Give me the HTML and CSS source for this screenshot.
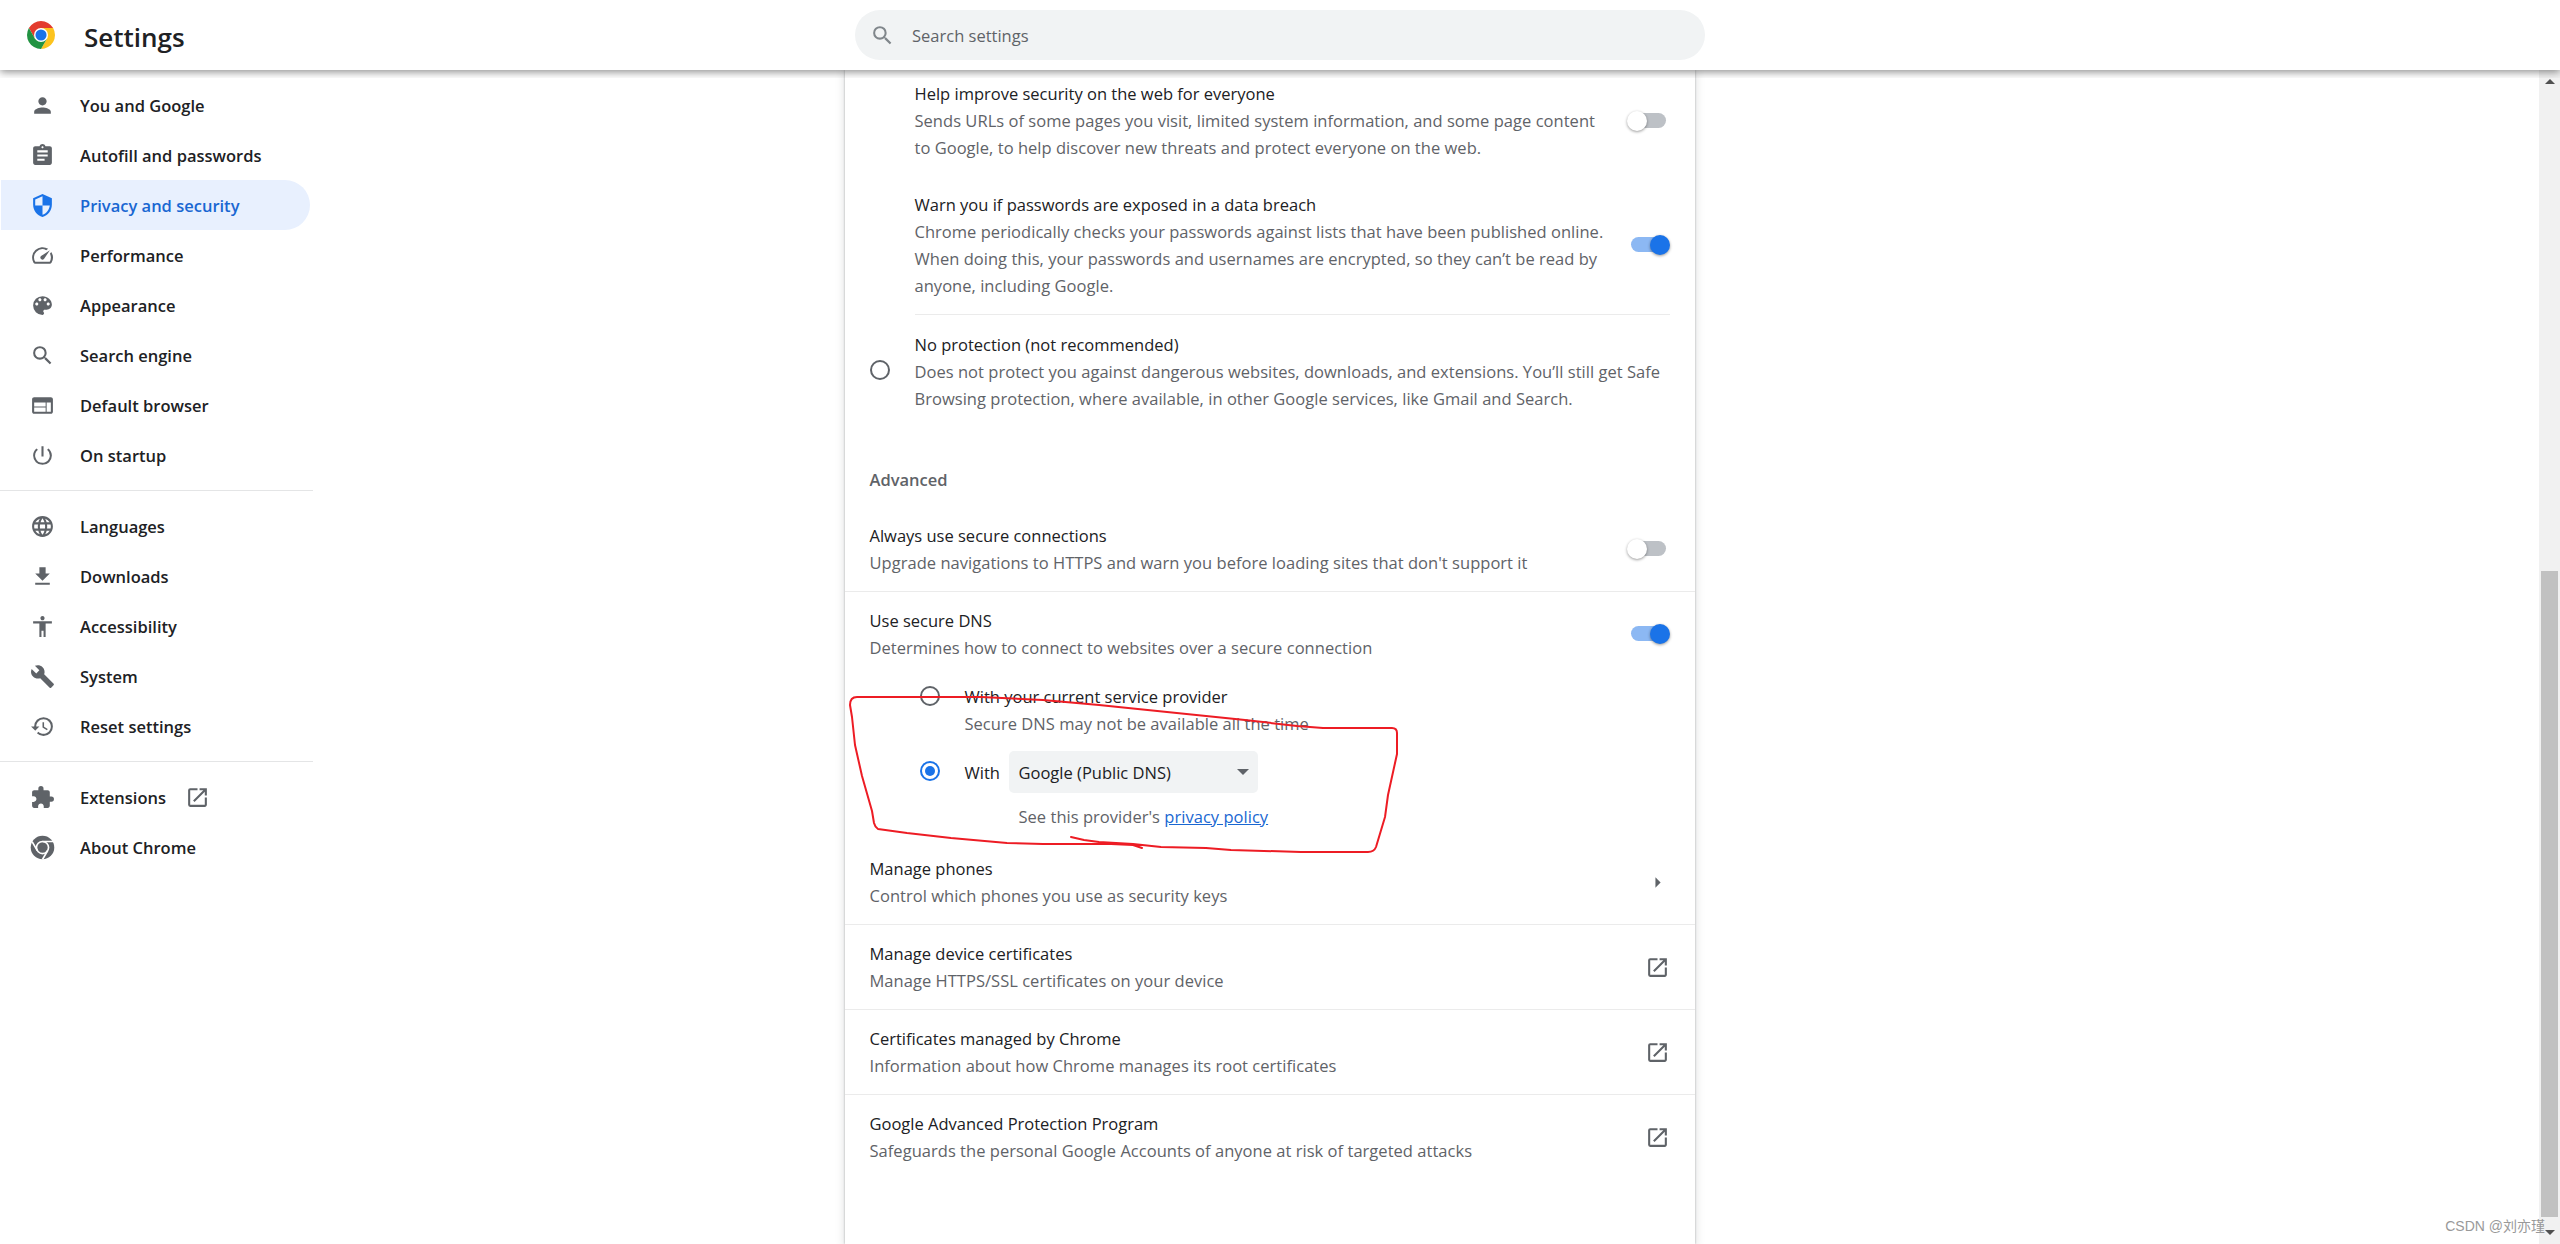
FILE: index.html
```html
<!DOCTYPE html>
<html lang="en">
<head>
  <meta charset="UTF-8" />
  <title>Settings - Privacy and security</title>
  <link rel="stylesheet" href="styles.css">
</head>
<body>
  <svg class="defs">
    <symbol id="open" viewBox="0 0 24 24"><path d="M19 19H5V5h7V3H5a2 2 0 0 0-2 2v14a2 2 0 0 0 2 2h14c1.100 0 2-.9 2-2v-7h-2v7zM14 3v2h3.590l-9.830 9.830 1.410 1.410L19 6.410V10h2V3h-7z"/></symbol>
    <symbol id="search" viewBox="0 0 24 24"><path d="M15.500 14h-.79l-.28-.27A6.471 6.471 0 0 0 16 9.500 6.500 6.500 0 1 0 9.500 16c1.610 0 3.090-.59 4.230-1.570l.27.28v.79l5 4.990L20.490 19l-4.990-5zm-6 0C7.010 14 5 11.990 5 9.500S7.010 5 9.500 5 14 7.010 14 9.500 11.990 14 9.500 14z"/></symbol>
  </svg>

  <header class="toolbar">
    <div class="brand">
      <svg class="logo" viewBox="0 0 48 48">
        <path fill="#e33b2e" d="M24 12h20.780A24 24 0 0 0 3.220 12l10.390 18z"/>
        <path fill="#fcc31e" d="M34.390 30 24 48A24 24 0 0 0 44.780 12H24z"/>
        <path fill="#229342" d="M13.610 30 3.220 12A24 24 0 0 0 24 48l10.390-18z"/>
        <circle cx="24" cy="24" r="12" fill="#fff"/>
        <circle cx="24" cy="24" r="9.500" fill="#1a73e8"/>
      </svg>
      <h1>Settings</h1>
    </div>
    <div class="search">
      <svg class="icon"><use href="#search"/></svg>
      <span>Search settings</span>
    </div>
  </header>

  <div class="container">
    <nav class="menu">
      <a class="item"><svg class="icon" viewBox="0 0 24 24"><path d="M12 12c2.210 0 4-1.790 4-4s-1.790-4-4-4-4 1.790-4 4 1.790 4 4 4zm0 2c-2.670 0-8 1.340-8 4v2h16v-2c0-2.660-5.330-4-8-4z"/></svg>You and Google</a>
      <a class="item"><svg class="icon" viewBox="0 0 24 24"><path d="M19 3h-4.180C14.400 1.840 13.300 1 12 1s-2.400.84-2.820 2H5c-1.100 0-2 .9-2 2v14c0 1.100.9 2 2 2h14c1.100 0 2-.9 2-2V5c0-1.100-.9-2-2-2zm-7 0c.55 0 1 .45 1 1s-.45 1-1 1-1-.45-1-1 .45-1 1-1zm2 14H7v-2h7v2zm3-4H7v-2h10v2zm0-4H7V7h10v2z"/></svg>Autofill and passwords</a>
      <a class="item selected"><svg class="icon" viewBox="0 0 24 24"><path d="M12 1 3 5v6c0 5.550 3.840 10.740 9 12 5.160-1.260 9-6.450 9-12V5l-9-4zm0 10.990h7c-.53 4.120-3.280 7.790-7 8.940V12H5V6.300l7-3.110v8.800z"/></svg>Privacy and security</a>
      <a class="item"><svg class="icon" viewBox="0 0 24 24"><path d="m20.380 8.570-1.230 1.850a8 8 0 0 1-.22 7.580H5.070A8 8 0 0 1 15.580 6.850l1.850-1.230A10 10 0 0 0 3.350 19a2 2 0 0 0 1.720 1h13.850a2 2 0 0 0 1.740-1 10 10 0 0 0-.27-10.440zm-9.790 6.840a2 2 0 0 0 2.830 0l5.660-8.490-8.490 5.660a2 2 0 0 0 0 2.830z"/></svg>Performance</a>
      <a class="item"><svg class="icon" viewBox="0 0 24 24"><path d="M12 3a9 9 0 0 0 0 18c.83 0 1.500-.67 1.500-1.500 0-.39-.15-.74-.39-1.010-.23-.26-.38-.61-.38-.99 0-.83.67-1.500 1.500-1.500H16c2.760 0 5-2.240 5-5 0-4.420-4.030-8-9-8zm-5.500 9c-.83 0-1.500-.67-1.500-1.500S5.670 9 6.500 9 8 9.670 8 10.500 7.330 12 6.500 12zm3-4C8.670 8 8 7.330 8 6.500S8.670 5 9.500 5s1.500.67 1.500 1.500S10.330 8 9.500 8zm5 0c-.83 0-1.500-.67-1.500-1.500S13.670 5 14.500 5s1.500.67 1.500 1.500S15.330 8 14.500 8zm3 4c-.83 0-1.500-.67-1.500-1.500S16.670 9 17.500 9s1.500.67 1.500 1.500-.67 1.500-1.500 1.500z"/></svg>Appearance</a>
      <a class="item"><svg class="icon"><use href="#search"/></svg>Search engine</a>
      <a class="item"><svg class="icon" viewBox="0 0 24 24"><path d="M20 4H4c-1.100 0-1.990.9-1.990 2L2 18c0 1.100.9 2 2 2h16c1.100 0 2-.9 2-2V6c0-1.100-.9-2-2-2zm-5 14H4v-4h11v4zm0-5H4V9h11v4zm5 5h-4V9h4v9z"/></svg>Default browser</a>
      <a class="item"><svg class="icon" viewBox="0 0 24 24"><path d="M13 3h-2v10h2V3zm4.830 2.170-1.420 1.420A6.920 6.920 0 0 1 19 12c0 3.870-3.130 7-7 7A6.995 6.995 0 0 1 7.580 6.580L6.170 5.170A8.932 8.932 0 0 0 3 12a9 9 0 0 0 18 0c0-2.740-1.230-5.180-3.170-6.830z"/></svg>On startup</a>
      <hr>
      <a class="item"><svg class="icon" viewBox="0 0 24 24"><path d="M11.990 2C6.470 2 2 6.480 2 12s4.470 10 9.990 10C17.520 22 22 17.520 22 12S17.520 2 11.990 2zm6.930 6h-2.950a15.650 15.650 0 0 0-1.380-3.560A8.030 8.030 0 0 1 18.920 8zM12 4.040c.83 1.200 1.480 2.530 1.910 3.960h-3.820c.43-1.430 1.080-2.760 1.910-3.960zM4.260 14C4.100 13.360 4 12.690 4 12s.1-1.360.26-2h3.380c-.08.66-.14 1.320-.14 2s.06 1.340.14 2H4.260zm.82 2h2.950c.32 1.250.78 2.450 1.380 3.560A7.987 7.987 0 0 1 5.080 16zm2.950-8H5.080a7.987 7.987 0 0 1 4.330-3.560A15.650 15.650 0 0 0 8.030 8zM12 19.960c-.83-1.200-1.480-2.530-1.910-3.960h3.820c-.43 1.430-1.080 2.760-1.910 3.960zM14.340 14H9.660c-.09-.66-.16-1.320-.16-2s.07-1.350.16-2h4.680c.09.65.16 1.320.16 2s-.07 1.340-.16 2zm.25 5.560c.6-1.110 1.060-2.310 1.380-3.560h2.950a8.030 8.030 0 0 1-4.330 3.560zM16.360 14c.08-.66.14-1.320.14-2s-.06-1.340-.14-2h3.380c.16.64.26 1.310.26 2s-.1 1.360-.26 2h-3.380z"/></svg>Languages</a>
      <a class="item"><svg class="icon" viewBox="0 0 24 24"><path d="M19 9h-4V3H9v6H5l7 7 7-7zM5 18v2h14v-2H5z"/></svg>Downloads</a>
      <a class="item"><svg class="icon" viewBox="0 0 24 24"><path d="M12 2c1.100 0 2 .9 2 2s-.9 2-2 2-2-.9-2-2 .9-2 2-2zm9 7h-6v13h-2v-6h-2v6H9V9H3V7h18v2z"/></svg>Accessibility</a>
      <a class="item"><svg class="icon" viewBox="0 0 24 24"><path d="m22.700 19-9.100-9.100c.9-2.300.4-5-1.500-6.900-2-2-5-2.400-7.400-1.300L9 6 6 9 1.600 4.700C.4 7.100.9 10.100 2.900 12.100c1.900 1.900 4.600 2.400 6.900 1.500l9.100 9.100c.4.4 1 .4 1.400 0l2.300-2.300c.5-.4.5-1.100.1-1.400z"/></svg>System</a>
      <a class="item"><svg class="icon" viewBox="0 0 24 24"><path d="M13 3a9 9 0 0 0-9 9H1l3.890 3.890.07.14L9 12H6c0-3.870 3.130-7 7-7s7 3.130 7 7-3.130 7-7 7c-1.930 0-3.680-.79-4.940-2.060l-1.420 1.420A8.954 8.954 0 0 0 13 21a9 9 0 0 0 0-18zm-1 5v5l4.280 2.540.72-1.210-3.500-2.080V8H12z"/></svg>Reset settings</a>
      <hr>
      <a class="item"><svg class="icon" viewBox="0 0 24 24"><path d="M20.500 11H19V7c0-1.100-.9-2-2-2h-4V3.500a2.500 2.500 0 0 0-5 0V5H4c-1.100 0-1.990.9-1.990 2v3.800H3.500c1.490 0 2.700 1.210 2.700 2.700s-1.210 2.700-2.700 2.700H2V20c0 1.100.9 2 2 2h3.800v-1.500c0-1.490 1.210-2.700 2.700-2.700 1.490 0 2.700 1.210 2.700 2.700V22H17c1.100 0 2-.9 2-2v-4h1.500a2.500 2.500 0 0 0 0-5z"/></svg>Extensions<svg class="icon external"><use href="#open"/></svg></a>
      <a class="item"><svg class="icon" viewBox="0 0 24 24">
        <circle cx="12" cy="12" r="11.300"/>
        <circle cx="12" cy="12" r="5.800" class="ring"/>
        <path class="ring" d="M12 6.200h10.500M7 14.900 2 6.300M17 14.900l-5 8.600"/>
      </svg>About Chrome</a>
    </nav>

    <main class="card">
      <section class="protection">
        <div class="row">
          <div class="text">
            <div>Help improve security on the web for everyone</div>
            <div class="secondary">Sends URLs of some pages you visit, limited system information, and some page content<br>to Google, to help discover new threats and protect everyone on the web.</div>
          </div>
          <div class="toggle"></div>
        </div>
        <div class="row">
          <div class="text">
            <div>Warn you if passwords are exposed in a data breach</div>
            <div class="secondary">Chrome periodically checks your passwords against lists that have been published online.<br>When doing this, your passwords and usernames are encrypted, so they can’t be read by<br>anyone, including Google.</div>
          </div>
          <div class="toggle on"></div>
        </div>
      </section>
      <div class="no-protection">
        <div class="radio"></div>
        <div class="text">
          <div>No protection (not recommended)</div>
          <div class="secondary">Does not protect you against dangerous websites, downloads, and extensions. You’ll still get Safe<br>Browsing protection, where available, in other Google services, like Gmail and Search.</div>
        </div>
      </div>

      <h2>Advanced</h2>
      <div class="row">
        <div class="text">
          <div>Always use secure connections</div>
          <div class="secondary">Upgrade navigations to HTTPS and warn you before loading sites that don't support it</div>
        </div>
        <div class="toggle"></div>
      </div>
      <div class="row line">
        <div class="text">
          <div>Use secure DNS</div>
          <div class="secondary">Determines how to connect to websites over a secure connection</div>
        </div>
        <div class="toggle on"></div>
      </div>
      <div class="dns">
        <div class="option">
          <div class="radio"></div>
          <div class="text">
            <div>With your current service provider</div>
            <div class="secondary">Secure DNS may not be available all the time</div>
          </div>
        </div>
        <div class="option provider">
          <div class="radio checked"></div>
          <span class="with">With</span>
          <div class="select">Google (Public DNS)</div>
        </div>
        <div class="secondary policy">See this provider's <a>privacy policy</a></div>
      </div>
      <div class="row phones">
        <div class="text">
          <div>Manage phones</div>
          <div class="secondary">Control which phones you use as security keys</div>
        </div>
        <svg class="icon" viewBox="0 0 24 24"><path d="m10 7 5 5-5 5z"/></svg>
      </div>
      <div class="row line">
        <div class="text">
          <div>Manage device certificates</div>
          <div class="secondary">Manage HTTPS/SSL certificates on your device</div>
        </div>
        <svg class="icon"><use href="#open"/></svg>
      </div>
      <div class="row line">
        <div class="text">
          <div>Certificates managed by Chrome</div>
          <div class="secondary">Information about how Chrome manages its root certificates</div>
        </div>
        <svg class="icon"><use href="#open"/></svg>
      </div>
      <div class="row line">
        <div class="text">
          <div>Google Advanced Protection Program</div>
          <div class="secondary">Safeguards the personal Google Accounts of anyone at risk of targeted attacks</div>
        </div>
        <svg class="icon"><use href="#open"/></svg>
      </div>
    </main>

    <div class="scrollbar">
      <i class="arrow up"></i>
      <div class="thumb"></div>
      <i class="arrow down"></i>
    </div>
  </div>

  <!-- hand-drawn mark around the DNS options -->
  <svg class="mark" viewBox="850 690 550 170">
    <path d="M1142 848 1133 845 1111 844H1043L1007 843 951 838 907 833 878 829Q875 827 874 823L872 811 862 776 855 745 852 717 850 705Q850 697 857 697H981L1043 700 1099 705 1167 712 1245 720 1297 726 1323 728H1392Q1397 728 1397 733V754L1388 795 1385 817 1376 847Q1374 852 1368 852H1301L1231 850 1206 848 1161 847 1133 844 1099 842 1084 840 1071 837"/>
  </svg>
  <div class="watermark">CSDN @刘亦瑾</div>
</body>
</html>
```
FILE: styles.css
```css
* {
  box-sizing: border-box;
}
body {
  margin: 0;
  height: 1244px;
  display: flex;
  flex-direction: column;
  overflow: hidden;
  background: #fff;
  color: #202124;
  font-family: "Open Sans", "Noto Sans", sans-serif;
  font-size: 16.5px;
  line-height: 27px;
}
.defs {
  display: none;
}
.icon {
  width: 25px;
  height: 25px;
  flex: none;
  fill: #5f6368;
}

/* toolbar */
.toolbar {
  flex: none;
  height: 70px;
  display: grid;
  grid-template-columns: 1fr 850px 1fr;
  align-items: center;
  background: #fff;
  box-shadow: 0 2px 8px rgba(0,0,0,0.45);
  clip-path: inset(0 0 -8px 0);
  z-index: 1;
}
.brand {
  display: flex;
  align-items: center;
  gap: 29px;
  padding-left: 27px;
}
.logo {
  width: 28px;
  height: 28px;
}
h1 {
  margin: 3px 0 0;
  font-size: 26px;
  font-weight: 600;
  line-height: 36px;
}
.search {
  height: 50px;
  display: flex;
  align-items: center;
  gap: 17px;
  padding-left: 15px;
  border-radius: 25px;
  background: #f1f3f4;
  color: #5f6368;
}
.search .icon {
  fill: #80868b;
}

.container {
  flex: 1;
  min-height: 0;
  display: grid;
  grid-template-columns: 1fr 850px 1fr 21px;
}

/* left menu */
.menu {
  width: 313px;
  padding-top: 10px;
  font-weight: 600;
}
.item {
  height: 50px;
  width: 309px;
  margin-left: 1px;
  padding: 0 0 0 29px;
  display: flex;
  align-items: center;
  gap: 25px;
  border-radius: 0 25px 25px 0;
}
.item .external {
  margin-left: -6px;
}
.selected {
  background: #e8f0fe;
  color: #1967d2;
}
.selected .icon {
  fill: #1a73e8;
}
.ring {
  fill: none;
  stroke: #fff;
  stroke-width: 1.6;
}
hr {
  margin: 10px 0;
  border: 0;
  border-top: 1px solid #e4e5e6;
}

/* settings card */
.card {
  box-shadow: 0 0 2px rgba(60,64,67,0.4), 0 2px 8px 2px rgba(60,64,67,0.12);
}
.secondary {
  color: #5f6368;
  letter-spacing: 0.03px;
}
.row {
  display: flex;
  align-items: center;
  justify-content: space-between;
  padding: 15px 25px;
  white-space: nowrap;
}
.line {
  border-top: 1px solid #ebebeb;
}
.protection {
  margin: -5px 25px 0 70px;
  border-bottom: 1px solid #ebebeb;
}
.protection .row {
  padding: 15px 0;
}
.no-protection {
  display: flex;
  align-items: center;
  gap: 25px;
  padding: 16px 25px;
  white-space: nowrap;
}
.radio {
  flex: none;
  width: 20px;
  height: 20px;
  border: 2px solid #5f6368;
  border-radius: 50%;
}
.no-protection .radio {
  margin-bottom: 3px;
}
.checked {
  border-color: #1a73e8;
  padding: 3px;
}
.checked::before {
  content: "";
  display: block;
  height: 10px;
  border-radius: 50%;
  background: #1a73e8;
}
.toggle {
  flex: none;
  width: 43px;
  height: 20px;
  padding: 2px 4px;
  position: relative;
}
.toggle::before {
  content: "";
  display: block;
  width: 35px;
  height: 15px;
  border-radius: 8px;
  background: #bdc1c6;
}
.toggle::after {
  content: "";
  position: absolute;
  left: 0;
  top: 0;
  width: 20px;
  height: 20px;
  border-radius: 50%;
  background: #fff;
  box-shadow: 0 1px 3px rgba(0,0,0,0.4);
}
.on::before {
  background: #8cb8f3;
}
.on::after {
  left: 23px;
  background: #1a73e8;
}
h2 {
  margin: 38px 25px 14px;
  color: #5f6368;
  font-size: 16.5px;
  font-weight: 600;
  line-height: 27px;
}
.dns {
  padding: 7px 0 0 75px;
}
.option {
  display: flex;
  gap: 25px;
}
.option .radio {
  margin-top: 3px;
}
.provider {
  align-items: center;
  margin-top: 14px;
}
.provider .radio {
  margin: 0 0 2px;
}
.with {
  width: 19px;
}
.select {
  width: 249px;
  height: 42px;
  padding: 0 9px 0 10px;
  display: flex;
  align-items: center;
  justify-content: space-between;
  border-radius: 5px;
  background: #f1f3f4;
}
.select::after {
  content: "";
  border: 6px solid transparent;
  border-top-color: #5f6368;
  border-bottom: 0;
}
.policy {
  margin: 10px 0 0 99px;
}
.policy a {
  color: #1967d2;
  text-decoration: underline;
}
.phones {
  padding-top: 25px;
}

/* scrollbar */
.scrollbar {
  grid-column: 4;
  display: flex;
  flex-direction: column;
  align-items: center;
  background: #f1f1f1;
}
.arrow {
  border: 5px solid transparent;
}
.up {
  margin-top: 4px;
  border-bottom-color: #505050;
}
.thumb {
  width: 17px;
  height: 646px;
  margin-top: 487px;
  background: #c1c1c1;
}
.down {
  margin-top: 13px;
  border-top-color: #505050;
}

/* overlays */
.mark {
  position: absolute;
  left: 850px;
  top: 690px;
  width: 550px;
  height: 170px;
  overflow: visible;
  fill: none;
  stroke: #ed1c24;
  stroke-width: 2;
  stroke-linejoin: round;
  stroke-linecap: round;
  z-index: 2;
}
.watermark {
  position: absolute;
  right: 15px;
  bottom: 4px;
  z-index: 2;
  color: #999;
  font: 14px/27px "Liberation Sans", "Noto Sans CJK SC", sans-serif;
}
```
